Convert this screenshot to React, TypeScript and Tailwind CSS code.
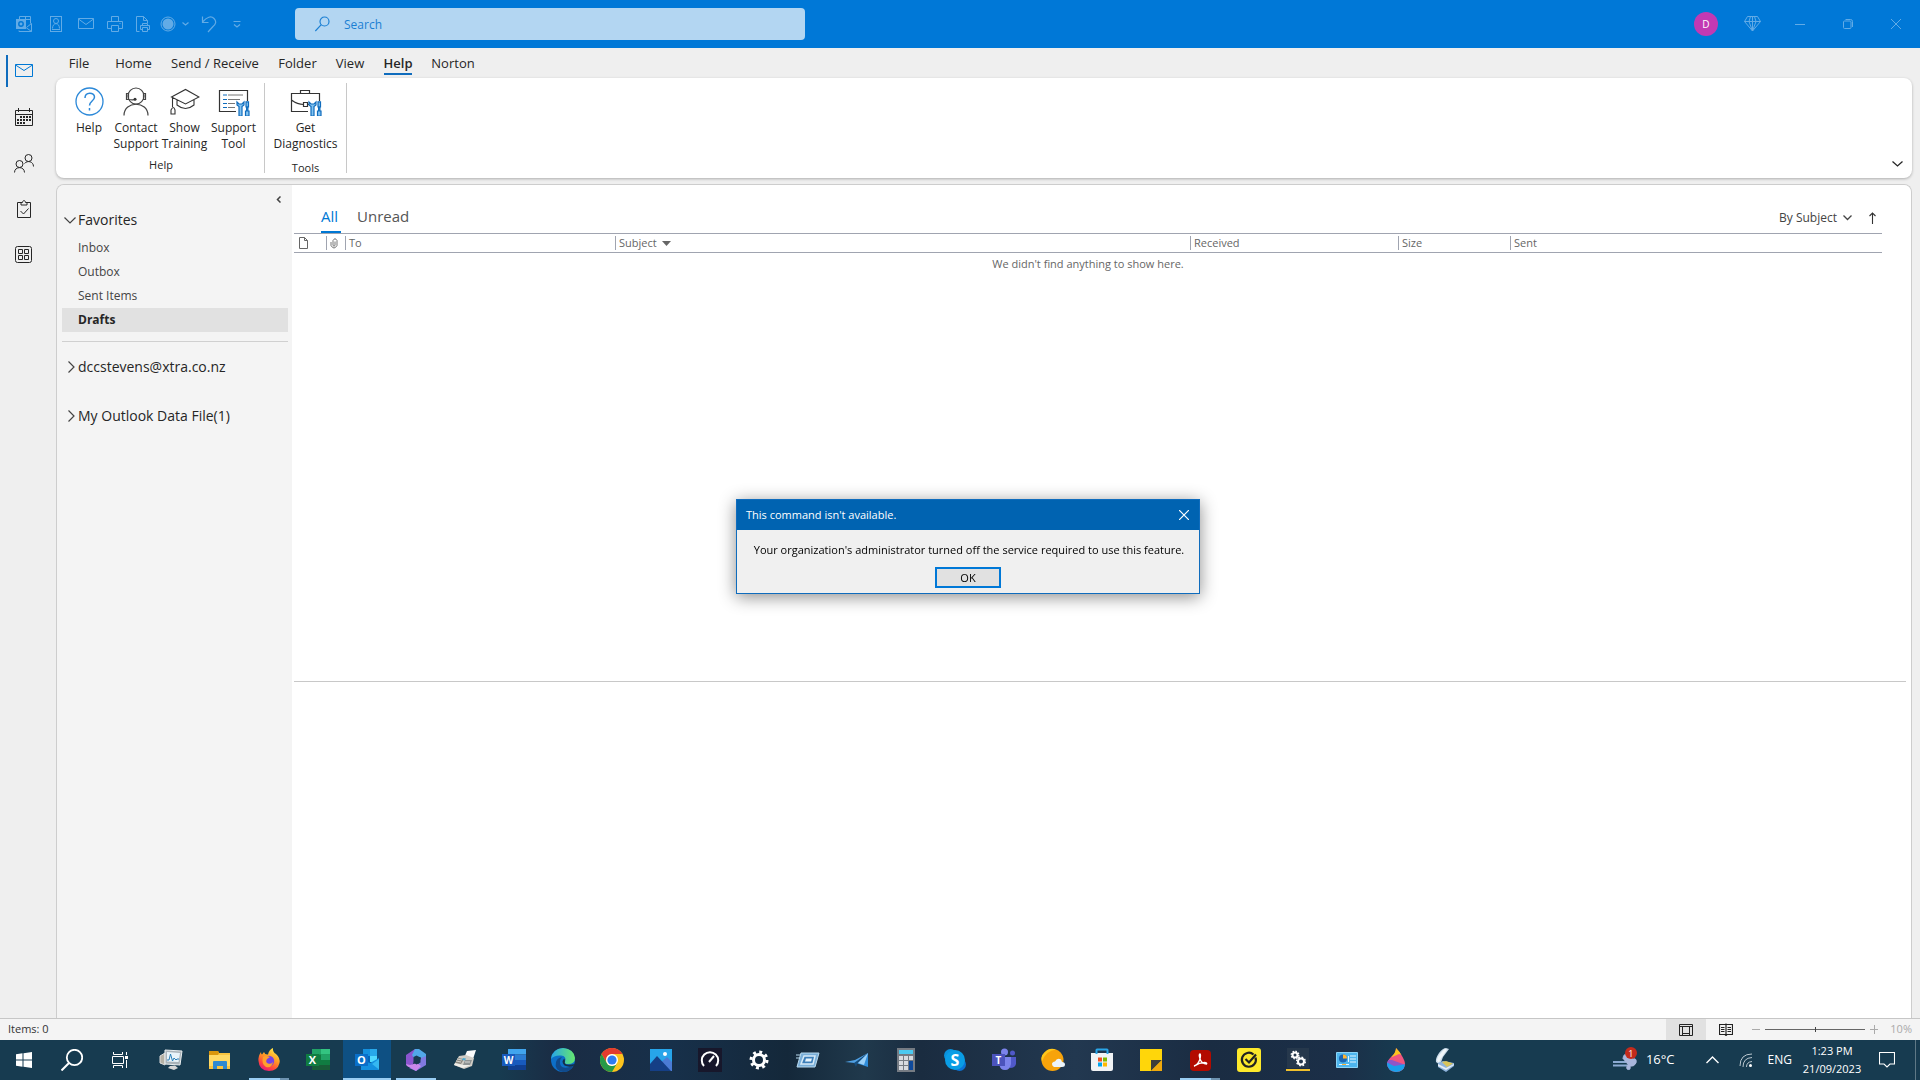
import React from "react";

type Kids = { children?: React.ReactNode };

function Svg({ w = 24, h, vb, children, className }: Kids & { w?: number; h?: number; vb?: string; className?: string }) {
  const hh = h ?? w;
  return (
    <svg width={w} height={hh} viewBox={vb ?? `0 0 ${w} ${hh}`} fill="none" stroke="currentColor" strokeWidth="1" aria-hidden="true" className={className ?? "shrink-0"}>
      {children}
    </svg>
  );
}

function IconButton({ label, className, children }: Kids & { label: string; className: string }) {
  return (
    <button type="button" aria-label={label} title={label} className={`flex shrink-0 items-center justify-center ${className}`}>
      {children}
    </button>
  );
}

/* ---------- Title bar ---------- */

function TitleBar() {
  return (
    <header className="flex h-12 shrink-0 items-center bg-[#0078d7] pl-2 text-[#62abe6]">
      <IconButton label="Outlook" className="h-12 w-8">
        <Svg w={17}>
          <path d="M3.500 3V.5h11v7M9.500.5v6M3 14.500v1h12.500V7.500L11 11M10 11.500l5.500 4M3.500 3.500h11" />
          <rect x="0.500" y="3.500" width="9" height="9" fill="#62abe6" />
          <circle cx="5" cy="8" r="2.200" stroke="#0078d7" strokeWidth="1.500" />
        </Svg>
      </IconButton>
      <IconButton label="Address book" className="h-12 w-8">
        <Svg w={12} h={16}>
          <rect x="0.5" y="0.5" width="11" height="15" />
          <circle cx="6" cy="5" r="2.500" />
          <path d="M2.500 12.500c0-6.500 7-6.500 7 0" />
          <path d="M2 13.500h8" />
        </Svg>
      </IconButton>
      <IconButton label="New email" className="h-12 w-[27px]">
        <Svg w={16} h={12}><path d="M.5.5h15v10H.5zM.5 1 8 6.500 15.500 1" /></Svg>
      </IconButton>
      <IconButton label="Print" className="h-12 w-[31px]">
        <Svg w={16} h={16}><path d="M4.500 5V.5h7V5M4.500 12.500H.5v-7h15v7h-4M4.500 9.500h7v6h-7zM12.500 7.500h1" /></Svg>
      </IconButton>
      <IconButton label="Quick print" className="h-12 w-[27px]">
        <Svg w={15} h={16}><path d="M3.500 15.500h-3V.5h7l4 4V7M7.500.5v4h4M6.500 10V7.500h5V10M6 13.500H4.500v-4h9v4H12M6.500 11.500h5v4h-5z" /></Svg>
      </IconButton>
      <IconButton label="Touch mode" className="h-12 w-[21px]">
        <Svg w={16}><circle cx="8" cy="8" r="7" /><circle cx="8" cy="8" r="5.500" fill="currentColor" stroke="none" /></Svg>
      </IconButton>
      <IconButton label="Touch mode options" className="h-12 w-[15px]">
        <Svg w={7} h={4}><path d="m.5.5 3 2.500L6.500.5" strokeWidth="1.200" /></Svg>
      </IconButton>
      <IconButton label="Undo" className="ml-0.5 h-12 w-7">
        <Svg w={16} h={17}><path d="M1.500.5v6h6M1.500 6C6 1 10-.5 13 2.500s1.500 6-1 8L7 16" strokeWidth="1.200" /></Svg>
      </IconButton>
      <IconButton label="Customise toolbar" className="h-12 w-7">
        <Svg w={8} h={7}><path d="M.5 .5h7M1 3.500 4 6l3-2.500" strokeWidth="1.200" /></Svg>
      </IconButton>
      <label className="ml-11 flex h-8 w-[510px] items-center rounded-[4px] bg-[#b3d6f2] pl-5 text-[#1b7fd3]">
        <Svg w={15} h={16}><circle cx="9.500" cy="5.500" r="4.500" strokeWidth="1.200" /><path d="m6.300 8.700-6 6.300" strokeWidth="1.200" /></Svg>
        <input aria-label="Search" placeholder="Search" className="ml-3.5 min-w-0 flex-1 bg-transparent pt-0.5 text-xs outline-none placeholder:text-[#1b7fd3]" />
      </label>
      <div className="flex-1" />
      <button type="button" aria-label="Account" className="mr-[10px] flex size-6 items-center justify-center rounded-full bg-[#c239b3] text-[10px] text-white">D</button>
      <IconButton label="Premium" className="h-12 w-12">
        <Svg w={17} h={16}><path d="M3.500.5h10l3 5-8 9.500-8-9.500zM.5 5.500h16M6.500.5l-1.500 5L8.500 15 12 5.500 10.500.5M8.500.5V15" /></Svg>
      </IconButton>
      <IconButton label="Minimise" className="h-12 w-12"><Svg w={10} h={1}><path d="M0 .5h10" /></Svg></IconButton>
      <IconButton label="Restore" className="h-12 w-12">
        <Svg w={10}><rect x=".5" y="2" width="7.500" height="7.500" rx="1" /><path d="M2.500.5h5q2 0 2 2v5.500" /></Svg>
      </IconButton>
      <IconButton label="Close" className="h-12 w-12"><Svg w={10}><path d="m0 0 10 10M10 0 0 10" /></Svg></IconButton>
    </header>
  );
}

/* ---------- Left rail ---------- */

function Rail() {
  return (
    <nav aria-label="Modules" className="flex w-14 shrink-0 flex-col text-[#262626]">
      <div className="mt-[7px] flex h-8 items-center">
        <span className="ml-1.5 h-8 w-0.5 bg-[#0f6cbd]" />
        <IconButton label="Mail" className="h-8 w-8 pb-0.5 text-[#0078d4]">
          <Svg w={18} h={13}><path d="M.5.5h17v12H.5zM.5 1 9 6.500 17.500 1" /></Svg>
        </IconButton>
      </div>
      <IconButton label="Calendar" className="mt-3.5 h-8 w-12">
        <Svg w={18} h={18}>
          <path d="M.5 2.500h17v15H.5zM.5 6.500h17M3.500 0v4M14.500 0v4" />
          <path d="M5 9h11M2 12h14M2 15h9" strokeWidth="2" strokeDasharray="2 1" />
        </Svg>
      </IconButton>
      <IconButton label="People" className="mt-3.5 h-8 w-12">
        <Svg w={20} h={19}><circle cx="5.500" cy="10" r="3.500" /><path d="M.5 18.500c0-6.500 10-6.500 10 0" /><circle cx="14.500" cy="4" r="3.500" /><path d="M10.500 9.500c3-3.500 9-2 9 3" /></Svg>
      </IconButton>
      <IconButton label="Tasks" className="mt-3.5 h-8 w-12">
        <Svg w={14} h={18}><path d="M4 2.500H.5v15h13v-15H10M4 2.500V5h6V2.500H8.500c0-2.500-3-2.500-3 0zM3.500 11l3 3 5-5.500" /></Svg>
      </IconButton>
      <IconButton label="Apps" className="mt-[13px] h-8 w-12 pr-px">
        <Svg w={17} h={17}><rect x=".5" y=".5" width="16" height="16" rx="2" /><path d="M3.500 3.500h4v4h-4zM9.500 3.500h4v4h-4zM3.500 9.500h4v4h-4zM9.500 9.500h4v4h-4z" /></Svg>
      </IconButton>
    </nav>
  );
}

/* ---------- Ribbon ---------- */

const tabs = [
  { name: "File", cls: "w-[18px]" },
  { name: "Home", cls: "w-[35px]" },
  { name: "Send / Receive", cls: "w-[88px]" },
  { name: "Folder", cls: "w-[37px]" },
  { name: "View", cls: "w-[28px]" },
  { name: "Help", cls: "w-[28px]" },
  { name: "Norton", cls: "w-[42px]" },
];

function RibbonTabs() {
  return (
    <div role="tablist" className="flex h-[30px] items-start gap-5 pl-3.5 pt-[3px] text-[13px] leading-6 text-[#262626]">
      {tabs.map((t, i) => (
        <button
          key={t.name}
          type="button"
          role="tab"
          aria-selected={t.name === "Help"}
          className={`flex h-6 justify-center whitespace-nowrap ${t.cls} ${i === 0 ? "mr-2" : ""} ${t.name === "Help" ? "border-b-2 border-[#0f6cbd] font-semibold" : ""}`}
        >
          {t.name}
        </button>
      ))}
    </div>
  );
}

function Tools() {
  return (
    <g fill="#83c3f0" stroke="#0f6cbd" strokeWidth="1.200">
      <path d="M1 1v3l2 1.500v9.500h3V5.500L8 4V1L6 3H3z" />
      <path d="M10 .8h2.500v5H10zM10.600 6v4H9.500v5h3.500v-5h-1.100V6" />
    </g>
  );
}

function RibbonButton({ lines, className, children }: Kids & { lines: string[]; className: string }) {
  return (
    <button type="button" className={`flex shrink-0 flex-col items-center text-xs leading-4 whitespace-nowrap text-[#262626] ${className}`}>
      <span className="mb-px flex h-9 items-center justify-center">{children}</span>
      {lines.map((l) => (
        <span key={l}>{l}</span>
      ))}
    </button>
  );
}

function Ribbon() {
  return (
    <section aria-label="Ribbon" className="mr-2 flex h-[100px] shrink-0 rounded-lg bg-white pt-[5px] shadow-[0_1px_3px_rgba(0,0,0,0.28)]">
      <div className="flex h-[90px] flex-col items-center border-r border-[#c8c8c8] pr-[7px] pl-[9px]">
        <div className="flex h-[77px]">
          <RibbonButton lines={["Help"]} className="w-12">
            <Svg w={29} className="text-[#2b88d8]">
              <circle cx="14.500" cy="14.500" r="13.500" strokeWidth="1.300" />
              <path d="M10 11c0-6.500 9.500-6 9.500-1 0 4-5 4-5 8.500M14.500 21v2.500" strokeWidth="1.500" />
            </Svg>
          </RibbonButton>
          <RibbonButton lines={["Contact", "Support"]} className="w-[46px]">
            <Svg w={26} h={29} className="text-[#444]">
              <circle cx="13" cy="9" r="8" strokeWidth="1.200" />
              <path d="M5.500 6.500H3.500v6h2zM20.500 6.500h2v6h-2zM5.500 12.500q6 1 6-.5" strokeWidth="1.200" />
              <circle cx="12" cy="12.200" r="1.500" fill="#333" stroke="none" />
              <path d="M1 28.500c0-15 24-15 24 0" strokeWidth="1.200" />
            </Svg>
          </RibbonButton>
          <RibbonButton lines={["Show", "Training"]} className="w-[51px]">
            <Svg w={30} h={27} className="text-[#333]">
              <path d="m1.500 9 14-7.500L29 9l-13.500 7zM7 12v5q8.500 7 17 0v-5M2.500 9v10M1 26v-4q2.500-5 4 0v4z" strokeWidth="1.100" />
            </Svg>
          </RibbonButton>
          <RibbonButton lines={["Support", "Tool"]} className="w-[47px]">
            <Svg w={32} h={29} className="text-[#333]">
              <path d="M18 24.500H1.500v-21h28V14" strokeWidth="1.200" />
              <path d="M5 8h4M5 12.500h4M5 16.500h4M5 20.500h4" stroke="#0f6cbd" />
              <path d="M10 8h15M10 12.500h12M10 16.500h7M10 20.500h7" stroke="#777" />
              <g transform="translate(18 14)"><Tools /></g>
            </Svg>
          </RibbonButton>
        </div>
        <div className="text-[11px] leading-4 text-[#262626]">Help</div>
      </div>
      <div className="flex h-[90px] flex-col items-center border-r border-[#c8c8c8] px-2">
        <RibbonButton lines={["Get", "Diagnostics"]} className="h-[77px] w-[65px]">
          <Svg w={32} h={29} className="text-[#333]">
            <path d="M10.500 6.500v-3h9v3M18 24.500H1.500v-18h28V14M1.500 13q6 4.500 12 4.500M17 17.500h3M13.500 15.500h4v4h-4z" strokeWidth="1.200" />
            <g transform="translate(18 14)"><Tools /></g>
          </Svg>
        </RibbonButton>
        <div className="text-[11px] leading-4 text-[#262626]">Tools</div>
      </div>
      <div className="flex-1" />
      <IconButton label="Collapse ribbon" className="mr-[7px] mb-1.5 size-4 self-end text-[#262626]">
        <Svg w={11} h={6}><path d="m.5.5 5 4.500 5-4.500" strokeWidth="1.300" /></Svg>
      </IconButton>
    </section>
  );
}

/* ---------- Folder pane ---------- */

const favourites = ["Inbox", "Outbox", "Sent Items", "Drafts"];

function FolderGroup({ name, open, className }: { name: string; open?: boolean; className: string }) {
  return (
    <button type="button" aria-expanded={!!open} className={`flex h-6 items-center text-sm text-[#262626] ${className}`}>
      <span className="flex w-4 justify-center pr-px text-[#444]">
        {open ? (
          <Svg w={12} h={7}><path d="m.5.5 5.500 5.500L11.500.5" strokeWidth="1.200" /></Svg>
        ) : (
          <Svg w={7} h={12} className="ml-1 shrink-0"><path d="m.5.5 5.500 5.500L.5 11.500" strokeWidth="1.200" /></Svg>
        )}
      </span>
      {name}
    </button>
  );
}

function Folders() {
  return (
    <aside className="flex w-[235px] shrink-0 flex-col bg-[#f4f4f4] pr-1 pl-[5px]">
      <IconButton label="Minimise folder pane" className="mt-1.5 mr-0.5 size-4 self-end text-[#444]">
        <Svg w={5} h={7}><path d="M4.500.5 1.500 3.500l3 3" strokeWidth="1.500" /></Svg>
      </IconButton>
      <FolderGroup name="Favorites" open className="mt-px" />
      <ul className="mt-1 text-xs leading-6 text-[#444]">
        {favourites.map((f) => (
          <li key={f}>
            <a href="#" className={f === "Drafts" ? "block bg-[#e1e1e1] pl-4 font-bold text-[#262626]" : "block pl-4"}>{f}</a>
          </li>
        ))}
      </ul>
      <hr className="mt-[9px] border-[#d0d0d0]" />
      <FolderGroup name="dccstevens@xtra.co.nz" className="mt-[13px]" />
      <FolderGroup name="My Outlook Data File(1)" className="mt-[25px]" />
    </aside>
  );
}

/* ---------- Message list ---------- */

function Th({ children }: Kids) {
  return (
    <th scope="col" className="p-0 text-left font-normal">
      <span className="flex h-3.5 items-center border-l border-[#a0a4b0] pl-[3px]">{children}</span>
    </th>
  );
}

function MessageList() {
  return (
    <main className="flex min-w-0 flex-1 flex-col bg-white">
      <section aria-label="Messages" className="mr-[5px] ml-0.5 flex h-[497px] flex-col border-b border-[#c8c8c8]">
        <div className="mr-6 flex h-12 items-end justify-between">
          <div role="tablist" className="ml-[27px] flex gap-4 text-[15px] leading-[30px] text-[#555]">
            <button type="button" role="tab" aria-selected="true" className="h-8 w-5 border-b-2 border-[#0078d4] text-left text-[#0078d4]">All</button>
            <button type="button" role="tab" aria-selected="false" className="h-8 pb-0.5">Unread</button>
          </div>
          <div className="flex h-[30px] items-center text-[#444]">
            <button type="button" className="flex items-center gap-1.5 text-xs">
              By Subject
              <Svg w={9} h={6}><path d="m.5.5 4 4 4-4" strokeWidth="1.300" /></Svg>
            </button>
            <IconButton label="Reverse sort order" className="mr-0.5 ml-3 size-4 text-[#333]">
              <Svg w={7} h={12}><path d="M3.500 12V1M.5 4 3.500 1l3 3" strokeWidth="1.100" /></Svg>
            </IconButton>
          </div>
        </div>
        <div className="mr-6">
          <table className="w-full table-fixed border-separate border-spacing-0 text-[11px] leading-4 text-[#666]">
            <colgroup>
              <col className="w-8" />
              <col className="w-[19px]" />
              <col className="w-[270px]" />
              <col />
              <col className="w-[208px]" />
              <col className="w-28" />
              <col className="w-[372px]" />
            </colgroup>
            <thead>
              <tr className="h-5 [&>th]:border-y [&>th]:border-[#a0a4b0]">
                <th scope="col" aria-label="Item type" className="p-0">
                  <Svg w={9} h={12} className="ml-[5px]"><path d="M.5.5h5l3 3v8h-8zM5.500.5v3h3" /></Svg>
                </th>
                <Th><Svg w={8} h={11}><path d="M1 4v3.500q3 5 6 0V2.500q-2-3.500-4 0v5q1 1.500 2 0V3.500" strokeWidth="0.900" /></Svg></Th>
                <Th>To</Th>
                <Th>Subject<Svg w={9} h={5} className="ml-[5px]"><path d="M0 0h9L4.500 5z" fill="#666" stroke="none" /></Svg></Th>
                <Th>Received</Th>
                <Th>Size</Th>
                <Th>Sent</Th>
              </tr>
            </thead>
            <tbody>
              <tr><td colSpan={7} className="p-0 pt-[3px] text-center">We didn&apos;t find anything to show here.</td></tr>
            </tbody>
          </table>
        </div>
      </section>
    </main>
  );
}

/* ---------- Status bar ---------- */

function StatusBar() {
  return (
    <footer className="flex h-[22px] shrink-0 items-center border-t border-[#c6c6c6] bg-[#f4f4f4] pl-2 text-[11px] text-[#333]">
      <span>Items: 0</span>
      <div className="flex-1" />
      <IconButton label="Normal view" className="h-full w-10 bg-[#e1e1e1] text-[#222]">
        <Svg w={14} h={12}><path d="M.5.5h13v11H.5zM.5 2.500h13M3.500 2.500v9M10.500 2.500v9M3.500 9.500h7" /></Svg>
      </IconButton>
      <IconButton label="Reading view" className="h-full w-10 text-[#222]">
        <Svg w={14} h={13}><path d="M7 1.500H.5v10H6l1 1 1-1h5.500v-10zM7 .5v12M2 4.500h3.500M2 6.500h3.500M2 8.500h3.500M8.500 4.500H12M8.500 6.500H12M8.500 8.500H12" strokeWidth="1.200" /></Svg>
      </IconButton>
      <IconButton label="Zoom out" className="h-full w-[19px] text-[#aaa]"><Svg w={8} h={1}><path d="M0 .5h8" /></Svg></IconButton>
      <input
        type="range"
        aria-label="Zoom"
        defaultValue={50}
        className="h-[5px] w-[100px] appearance-none bg-[linear-gradient(#666,#666)] bg-[length:100%_1px] bg-center bg-no-repeat [&::-webkit-slider-thumb]:h-[5px] [&::-webkit-slider-thumb]:w-px [&::-webkit-slider-thumb]:appearance-none [&::-webkit-slider-thumb]:bg-[#444]"
      />
      <IconButton label="Zoom in" className="h-full w-[18px] text-[#aaa]"><Svg w={8} h={9}><path d="M0 4.500h8M4.500 0v9" /></Svg></IconButton>
      <span className="mr-2 ml-[7px] text-[#aaa]">10%</span>
    </footer>
  );
}

/* ---------- Taskbar ---------- */

function Tile({ label, children, active, mark, className = "" }: Kids & { label: string; active?: boolean; mark?: "full" | "single" | "multi"; className?: string }) {
  return (
    <button type="button" aria-label={label} title={label} className={`relative flex h-10 w-12 shrink-0 items-center justify-center ${active ? "bg-[#0e5083]" : ""} ${className}`}>
      {children}
      {mark && (
        <span className={`absolute bottom-0 flex h-0.5 ${mark === "full" ? "inset-x-0" : "inset-x-1"}`}>
          <span className="flex-1 bg-[#99cdf3]" />
          {mark === "multi" && <span className="w-[9px] bg-[#6d93b0]" />}
        </span>
      )}
    </button>
  );
}

const glyph = { fill: "#fff", stroke: "none", fontFamily: "Open Sans, sans-serif", fontWeight: 700, textAnchor: "middle" as const };

function Taskbar() {
  return (
    <nav aria-label="Taskbar" className="flex h-10 shrink-0 bg-[linear-gradient(90deg,#173b50_0%,#173b50_26%,#1a2c44_29%,#17304a_35%,#14283a_41%,#20394c_45%,#1a2c40_48%,#223850_56%,#1a2c42_63%,#1b2f48_70%,#173b50_73%,#173b50_100%)] text-white">
      <Tile label="Start">
        <Svg w={16}><path d="M0 2.300 6.500 1.300v6.200H0zM7.500 1.200 16 0v7.500H7.500zM0 8.500h6.500v6.200L0 13.800zM7.500 8.500H16V16l-8.500-1.200z" fill="#fff" stroke="none" /></Svg>
      </Tile>
      <Tile label="Search"><Svg w={22}><circle cx="13.500" cy="8.500" r="7.700" strokeWidth="1.800" /><path d="m8 14-7.500 7.500" strokeWidth="2" /></Svg></Tile>
      <Tile label="Task view">
        <Svg w={17} h={16}><path d="M1.500 0v2.500h9V0M.5 4.500h11v7H.5zM1.500 16v-2.500h9V16M14.500 0v3M14.500 8v8" /><path d="M13 4h3v3h-3z" fill="#fff" stroke="none" /></Svg>
      </Tile>
      <div className="ml-[3px] flex min-w-0 flex-1 gap-px overflow-hidden">
        <Tile label="Resource monitor">
          <Svg w={24}><path d="M1 8 6 5v12l-5-2z" fill="#b5b1a5" stroke="#ddd" /><path d="m6 2 17 1-2 14-15-1z" fill="#aab3b9" stroke="#e9eef0" /><path d="m8 4 13 1-1.500 9-11.500-.500z" fill="#e9f4fa" stroke="none" /><path d="M8 12h2l1.500-6 2 7 1.500-3 2 2 1-1h2" stroke="#2a7fb8" /><path d="m11 18 5-.5 3 2.500-4 2-6-2z" fill="#d5d5d5" stroke="none" /></Svg>
        </Tile>
        <Tile label="File explorer">
          <Svg w={24}><path d="M1 3h9l1 2h11v16H1z" fill="#f9c440" stroke="none" /><path d="M1 3h9l1 2-1 2H1z" fill="#d9960d" stroke="none" /><path d="M1 7h21v11H1z" fill="#ffd965" stroke="none" /><path d="M5 21v-7q0-1 1-1h12q1 0 1 1v7h-4v-3H9v3z" fill="#2f8ad2" stroke="none" /></Svg>
        </Tile>
        <Tile label="Firefox" mark="multi">
          <Svg w={24}>
            <defs><linearGradient id="ff" x1=".8" y1="0" x2=".3" y2="1"><stop stopColor="#fff04a" /><stop offset=".45" stopColor="#ff9a24" /><stop offset=".75" stopColor="#ff4a3c" /><stop offset="1" stopColor="#e5187c" /></linearGradient></defs>
            <path d="M4 4q0 2 1 2.500L7 4q1 3 4 2.500 1-5 5-6.500-.5 4 3 6 4.500 4 3.500 9Q20.500 23 12 23 2 22.500 1.500 13 1 8 4 4z" fill="url(#ff)" stroke="none" />
            <circle cx="12" cy="13" r="5.200" fill="#7542e5" stroke="none" /><path d="M6 9q3-2 7 0l-3 2q-2 3 1 4.500 4 1 5-2-1 7-7 5.500Q4 16 6 9z" fill="#ffa02c" stroke="none" />
          </Svg>
        </Tile>
        <Tile label="Excel">
          <Svg w={24}><g stroke="none"><path d="M6 1h18v21H6z" fill="#107c41" /><path d="M6 1h9v5.500H6z" fill="#21a366" /><path d="M15 1h9v5.500h-9z" fill="#33c481" /><path d="M15 6.500h9V12h-9z" fill="#21a366" /><path d="M6 17h18v5H6z" fill="#185c37" /><path d="M15 12h9v5h-9z" fill="#107c41" /><path d="M0 6h13v12H0z" fill="#107c41" /></g><text x="6.500" y="16" fontSize="11" {...glyph}>X</text></Svg>
        </Tile>
        <Tile label="Outlook" active mark="full">
          <Svg w={24}><g stroke="none"><path d="M8 1h7v7H8z" fill="#1490df" /><path d="M15 1h7v7h-7z" fill="#28a8ea" /><path d="M8 8h7v7H8z" fill="#0364b8" /><path d="M15 8h7v6h-7z" fill="#50d9ff" /><path d="m6 12 9 3 9-5v12H6z" fill="#1490df" /><path d="m12 12 12 9.500V11l-7 5z" fill="#35b8f1" /><path d="M0 6h13v12H0z" fill="#0a6fc9" /></g><text x="6.500" y="16" fontSize="11" {...glyph}>O</text></Svg>
        </Tile>
        <Tile label="Microsoft 365" mark="single">
          <Svg w={22}><g stroke="none"><path d="m1 6 9-6 4 2-4 7-2 6-4 3-3-2z" fill="#8a55cf" /><path d="m10 0 4 0 7 5v9l-6-6-6 1-2-3z" fill="#51a8e8" /><path d="M21 7v9l-10 6-7-3 9-3 3-7z" fill="#8079e0" /><path d="m1 15 4 1 7-2 4 3-5 5-9-5z" fill="#c987ea" /><path d="m8.500 8 3-1.500 4 2v5l-4 2-3-2z" fill="#183a50" /></g></Svg>
        </Tile>
        <Tile label="Fax and scan">
          <Svg w={24} h={20}><g stroke="none"><path d="m14 1 9-1-3 9-9-1z" fill="#fbfbfb" /><path d="m6 6 7-1 8 3-2 8-8 3-10-4z" fill="#cfccc5" /><path d="m5 8 6 1-3 5-6-1z" fill="#8d8a82" /><path d="m12 10 7 0-2 5-7 0z" fill="#8f9494" /><path d="m1 15 9 3 8-3-8 0-8-2z" fill="#efeee9" /><path d="m10 8 3 .5-1 2-3-.5z" fill="#4faad2" /><path d="m4 9 5 1M3 11l5 1M12 12h5" stroke="#f3f3f0" strokeWidth=".7" /></g></Svg>
        </Tile>
        <Tile label="Word">
          <Svg w={24}><g stroke="none"><path d="M6 1h18v5.500H6z" fill="#41a5ee" /><path d="M6 6.500h18V12H6z" fill="#2b7cd3" /><path d="M6 12h18v5H6z" fill="#185abd" /><path d="M6 17h18v5H6z" fill="#103f91" /><path d="M0 6h13v12H0z" fill="#185abd" /></g><text x="6.500" y="16" fontSize="10" {...glyph}>W</text></Svg>
        </Tile>
        <Tile label="Edge">
          <Svg w={24}>
            <defs><linearGradient id="eg"><stop stopColor="#27a4e8" /><stop offset="1" stopColor="#66e86d" /></linearGradient></defs>
            <g stroke="none"><circle cx="12" cy="12" r="12" fill="#0d6fc8" /><path d="M0 11Q1 1 12 0q11 1 12 10 0 6-7 6-4 0-3-2 2-6-4-6.500Q3 7 0 11z" fill="url(#eg)" /><path d="M9 13q-1 10 13 5-3 6-10 6Q3 22 5 14q1-4 6-5-2 2-2 4z" fill="#114a8b" /><path d="M13.500 10.500q-4 3 0 7 4 2 9 .5l1.500-2q-12 2.500-10-3z" fill="#15304a" /></g>
          </Svg>
        </Tile>
        <Tile label="Chrome">
          <Svg w={24}><g stroke="none"><circle cx="12" cy="12" r="12" fill="#fcc31e" /><path d="M1.600 6A12 12 0 0 1 22.400 6H12a6 6 0 0 0-5.200 9z" fill="#e33b2e" /><path d="M1.600 6A12 12 0 0 0 12 24l5.200-9a6 6 0 0 1-10.400 0z" fill="#269947" /><circle cx="12" cy="12" r="6" fill="#fff" /><circle cx="12" cy="12" r="4.600" fill="#2f7bf0" /></g></Svg>
        </Tile>
        <Tile label="Photos">
          <Svg w={22}><g stroke="none"><path d="M0 0h22v22H0z" fill="#27a5ea" /><path d="m9 15 8-7 5 5v9H9z" fill="#4b7bd4" /><path d="m0 15 7-8 14 15H0z" fill="#153f86" /><circle cx="15" cy="5" r="2" fill="#fff" /></g></Svg>
        </Tile>
        <Tile label="Speed test">
          <Svg w={24}><path d="M0 0h24v24H0z" fill="#17172b" stroke="none" /><path d="M6 18a8.200 8.200 0 1 1 12 0" strokeWidth="2" /><path d="m11 14 5-6" strokeWidth="2" /></Svg>
        </Tile>
        <Tile label="Settings">
          <Svg w={20}><circle cx="10" cy="10" r="5.500" strokeWidth="3" /><circle cx="10" cy="10" r="8" strokeWidth="3" strokeDasharray="2.900 3.383" /></Svg>
        </Tile>
        <Tile label="Run">
          <Svg w={24} h={18}><path d="M5 2h18l-4 14H1z" fill="#79aed8" stroke="#b8d9ee" /><path d="m8 5 11 0-2 8H5z" fill="#3d7fb9" stroke="#d6eaf7" strokeWidth="1.500" /><path d="M10 7.500h6l-1 3H9z" fill="#e7f3fb" stroke="none" /><path d="M0 4h5M0 7h4" stroke="#b8d9ee" /></Svg>
        </Tile>
        <Tile label="Send">
          <Svg w={24} h={18}><g stroke="none"><path d="m0 11 10-2 13-7-9 8-4 2z" fill="#4fa0e4" /><path d="m11 12 12-10 0 14z" fill="#2f8ddb" /><path d="m9 12 14-10-11 11-1 3z" fill="#174d7c" /><path d="m13 12 10-10-4 12z" fill="#9bd0f7" /></g></Svg>
        </Tile>
        <Tile label="Calculator">
          <Svg w={18} h={24}><g stroke="none"><path d="M0 0h18v24H0z" fill="#757b83" /><path d="M2 2h14v4H2z" fill="#4cc9f0" /><path d="M2 8h4v4H2zM7 8h4v4H7zM12 8h4v4h-4zM2 13h4v4H2zM7 13h4v4H7zM2 18h4v4H2zM7 18h4v4H7z" fill="#d8dbe0" /><path d="M12 13h4v9h-4z" fill="#0f4a9c" /></g></Svg>
        </Tile>
        <Tile label="Skype">
          <Svg w={22}><g stroke="none"><circle cx="6.500" cy="6.500" r="6.500" fill="#0a92dc" /><circle cx="15.500" cy="15.500" r="6.500" fill="#0b73d5" /><circle cx="11" cy="11" r="10" fill="#0a9de5" /></g><text x="11" y="17" fontSize="16" {...glyph}>S</text></Svg>
        </Tile>
        <Tile label="Teams">
          <Svg w={24}><g stroke="none"><circle cx="12.500" cy="4" r="3.500" fill="#7b83eb" /><circle cx="20.500" cy="5" r="2.500" fill="#5059c9" /><path d="M17 9h7v7q-1 4-6 4z" fill="#5059c9" /><path d="M8 9h11v7q-1 6-6 6t-5.500-5z" fill="#7b83eb" /><path d="M0 6h13v12H0z" fill="#4b53bc" /></g><text x="6.500" y="16" fontSize="10" {...glyph}>T</text></Svg>
        </Tile>
        <Tile label="Weather">
          <Svg w={24}><g stroke="none"><circle cx="11.500" cy="12" r="11" fill="#f7a30b" /><path d="M3 5q5-6 12-3.500-10 1-14 12Q-1 8 3 5z" fill="#ffc61a" /><path d="M13 19q-2-1-2-3t3-2.500q2-4 6-2 1 2 1 2.500 3 0 3 2.500T21 19z" fill="#edf4fa" /></g></Svg>
        </Tile>
        <Tile label="Store">
          <Svg w={24}><path d="M1 5h22v16q0 2-2 2H3q-2 0-2-2z" fill="#f1f3f5" stroke="none" /><path d="M6.500 6V2q0-.5.500-.500h10q.5 0 .5.500v4" stroke="#2aa6e8" strokeWidth="2" /><g stroke="none"><path d="M8 9.500h4v4H8z" fill="#f25022" /><path d="M13 9.500h4v4h-4z" fill="#7fba00" /><path d="M8 14.500h4v4H8z" fill="#00a4ef" /><path d="M13 14.500h4v4h-4z" fill="#ffb900" /></g></Svg>
        </Tile>
        <Tile label="Sticky notes"><Svg w={22}><g stroke="none"><path d="M0 0h22v22H0z" fill="#ffd60a" /><path d="M11 11h11L11 22z" fill="#3e3d3a" /><path d="M22 11v11H11z" fill="#f0a90c" /></g></Svg></Tile>
        <Tile label="Acrobat" mark="multi">
          <Svg w={21}><rect width="21" height="21" rx="4" fill="#b30b00" stroke="none" /><path d="M4 16q4-1 6-7 1-5 0-5-1.500 0 0 5 2 5 6.500 5 1-1-2-1.500-5 0-10 3.500z" strokeWidth="1.300" /></Svg>
        </Tile>
        <Tile label="Norton">
          <Svg w={24}><rect width="24" height="24" rx="3" fill="#fde92b" stroke="none" /><path d="M16.500 6.500a7 7 0 1 0 2 3" stroke="#222" strokeWidth="2.200" /><path d="m8.500 11 3.500 3.500 7-8" stroke="#222" strokeWidth="2.200" /></Svg>
        </Tile>
        <Tile label="Services"><Svg w={24}><path d="M1 0h22v20H1z" fill="#26384c" stroke="none" /><circle cx="9" cy="7" r="2.500" strokeWidth="2" /><circle cx="9" cy="7" r="3.800" strokeWidth="1.300" strokeDasharray="1.500 1.485" /><circle cx="15" cy="13.500" r="3" strokeWidth="2" /><circle cx="15" cy="13.500" r="4.300" strokeWidth="1.500" strokeDasharray="1.700 1.677" /><path d="M0 22h24" stroke="#f0c02c" strokeWidth="2" /></Svg></Tile>
        <Tile label="Control panel"><Svg w={22} h={16}><path d="M.5.5h21v15H.5z" fill="#4db5ee" stroke="#8ad4f7" /><circle cx="7" cy="6.500" r="4" fill="#1a66b4" stroke="none" /><path d="M7 6.500v-4a4 4 0 0 1 4 4z" fill="#ffb534" stroke="none" /><path d="M14 4h6M14 7h6M14 10h6M12.500 4v6" stroke="#e4f5fe" /><path d="M3 12.500h10" stroke="#e4f5fe" /><path d="M6 12.500h4" stroke="#ffb534" /></Svg></Tile>
        <Tile label="Paint 3D">
          <Svg w={20} h={24}><defs><clipPath id="dr"><path d="M10 0q4 4 6 8 3 5 3 8-1 8-9 8-8-.5-9-8 0-3 4-7 5-4 5-9z" /></clipPath></defs><g stroke="none" clipPath="url(#dr)"><path d="M0 0h20v24H0z" fill="#f2557f" /><path d="M0 0h20v8l-7-2-7 3z" fill="#fdc41f" /><path d="m0 12 6 0 14 5v4H0z" fill="#8f57c8" /><path d="m0 14 8 4 12-2v8H0z" fill="#1aa0ec" /></g></Svg>
        </Tile>
        <Tile label="Scanner"><Svg w={20} h={24}><g stroke="none"><path d="m11 0 3 1-6 8-3 8-4-3q-1-3 3-9 4-5 7-5z" fill="#c9dbe9" /><path d="m10 1 2 .5-6 9-2 4-2-1.500Q2 9 6 5q2-3 4-4z" fill="#f1f6fa" /><path d="m3 15 5-2 11 2v3l-8 6-8-5z" fill="#8fb4dd" /><path d="m7 14 4-1 7 2.500-6 3.500z" fill="#d9c45a" /><path d="m3 16 8 4 8-4v1l-8 5-8-4z" fill="#e6eef6" /></g></Svg></Tile>
      </div>
      <button type="button" className="flex shrink-0 items-center gap-[9px] pr-[26px] text-[13px]">
        <span className="relative flex h-6 w-6 items-end">
          <Svg w={24} h={24}>
            <path d="M0 14h13M0 17.500h15" stroke="#8caad2" strokeWidth="2" />
            <path d="M10 11q0-5 5-6l5 6q4-1 3 4-2 4-6 3 1 5-3 3-1-2 1-4" fill="#a9b6dc" stroke="#a9b6dc" strokeWidth="1" />
          </Svg>
          <span className="absolute -top-px right-0 flex size-3 items-center justify-center rounded-full bg-[#c42b1c] text-[9px] leading-none">1</span>
        </span>
        16°C
      </button>
      <IconButton label="Show hidden icons" className="ml-0.5 w-5"><Svg w={13} h={8}><path d="m.5 7 6-6 6 6" strokeWidth="1.400" /></Svg></IconButton>
      <IconButton label="Network" className="ml-[13px] w-5">
        <Svg w={14} h={16}><path d="M1 14Q1 2 13 2M4 15Q4 6 13 5.500M7.500 15q0-5 5.500-5.500" stroke="#b9c6ce" /><circle cx="11.500" cy="13.500" r="1.500" fill="#fff" stroke="none" /></Svg>
      </IconButton>
      <button type="button" className="ml-3 shrink-0 text-xs">ENG</button>
      <button type="button" className="ml-2.5 w-[60px] shrink-0 text-center text-[11px] leading-[18px] whitespace-nowrap">
        <span className="block">1:23 PM</span>
        <span className="block">21/09/2023</span>
      </button>
      <IconButton label="Notifications" className="ml-4 w-[18px]"><Svg w={16} h={16}><path d="M.5.5h15v11.500H11l-3 3-3-3H.5z" strokeWidth="1.100" /></Svg></IconButton>
      <button type="button" aria-label="Show desktop" className="ml-[19px] w-[5px] shrink-0 border-l border-[#5f7886]" />
    </nav>
  );
}

/* ---------- Dialog ---------- */

function Dialog() {
  return (
    <div role="dialog" aria-labelledby="dlg-title" className="fixed top-[499px] left-[736px] w-[464px] border border-[#0f6cbd] bg-[#f0f0f0] shadow-[0_3px_16px_rgba(0,0,0,0.45)]">
      <div className="flex h-[30px] items-center justify-between bg-[#0063b1] pr-2.5 pl-[9px] text-white">
        <h2 id="dlg-title" className="text-[11px]">This command isn&apos;t available.</h2>
        <button type="button" aria-label="Close"><Svg w={10}><path d="m0 0 10 10M10 0 0 10" strokeWidth="1.200" /></Svg></button>
      </div>
      <div className="flex flex-col items-center pt-3 pb-[5px] text-[11px] leading-4 text-black">
        <p className="pl-0.5 whitespace-nowrap">Your organization&apos;s administrator turned off the service required to use this feature.</p>
        <button type="button" className="mt-[9px] h-[21px] w-[66px] border-2 border-[#0078d7] bg-[#e1e1e1]">OK</button>
      </div>
    </div>
  );
}

export default function App() {
  return (
    <div className="flex h-screen flex-col overflow-hidden bg-[#efefef] font-['Open_Sans',sans-serif]">
      <TitleBar />
      <div className="flex min-h-0 flex-1">
        <Rail />
        <div className="flex min-w-0 flex-1 flex-col">
          <RibbonTabs />
          <Ribbon />
          <div className="mt-1.5 mr-2 flex min-h-0 flex-1 overflow-hidden rounded-t-lg border border-b-0 border-[#cdcdcd]">
            <Folders />
            <MessageList />
          </div>
        </div>
      </div>
      <StatusBar />
      <Taskbar />
      <Dialog />
    </div>
  );
}
